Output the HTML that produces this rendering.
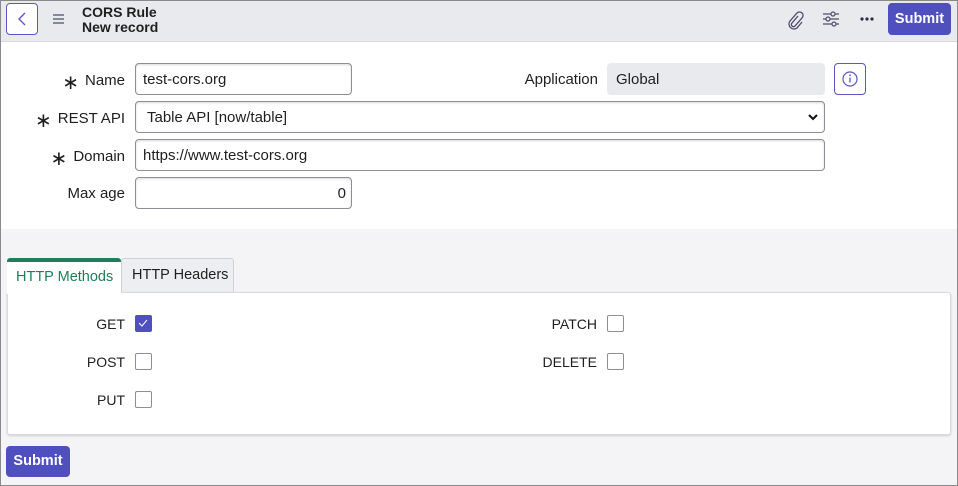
<!DOCTYPE html>
<html><head><meta charset="utf-8"><style>
*{box-sizing:border-box;margin:0;padding:0}
body{width:958px;height:486px;font-family:"Liberation Sans",sans-serif;color:#1f1f1f;background:#f4f4f6;position:relative;overflow:hidden}
.frame{position:absolute;inset:0;border:1px solid #8a8a8a;pointer-events:none;z-index:10}
.hdr{position:absolute;left:0;top:0;width:958px;height:42px;background:#e9eaee;border-bottom:1px solid #d8d9dd}
.back{position:absolute;left:6px;top:3px;width:32px;height:32px;border:1px solid #5b57c7;border-radius:4px;background:#fff}
.title{position:absolute;left:82px;top:5px;font-weight:bold;font-size:14px;line-height:15px;color:#1f1f1f}
.btn{position:absolute;background:#4f4fbf;color:#fff;font-weight:bold;font-size:14.5px;border-radius:4px;text-align:center}
.form{position:absolute;left:1px;top:42px;width:956px;height:187px;background:#fff}
.lbl{position:absolute;font-size:15px;text-align:right;color:#1f1f1f}
.inp{position:absolute;height:32px;border:1px solid #8e8e96;border-radius:4px;background:#fff;font-size:15px;padding:7px 10px;box-shadow:inset 0 1px 2px rgba(0,0,0,.15)}
.star{font-size:20px;font-weight:normal;vertical-align:-4px;margin-right:6px}
.tabA{position:absolute;left:7px;top:258px;width:114px;height:36px;background:#fff;border-top:4px solid #1d7f5a;border-radius:3px 3px 0 0;color:#1d7f5a;font-size:14.5px;padding:7px 0 0 9px;z-index:2}
.tabB{position:absolute;left:121px;top:258px;width:113px;height:35px;background:#eceef1;border:1px solid #d0d1d5;border-bottom:none;border-radius:3px 3px 0 0;font-size:14.5px;padding:8px 0 0 10px}
.panel{position:absolute;left:7px;top:292px;width:944px;height:143px;background:#fff;border:1px solid #d8d9dd;border-radius:0 3px 3px 3px;box-shadow:0 1px 2px rgba(0,0,0,.15)}
.cb{position:absolute;width:17px;height:17px;border:1.5px solid #8e8e96;border-radius:2px;background:#fff}
.cl{position:absolute;font-size:14px;text-align:right}
</style></head><body>
<div class="hdr">
 <div class="back"><svg width="30" height="30" viewBox="0 0 30 30"><path d="M18 9l-6 6 6 6" fill="none" stroke="#5b57c7" stroke-width="1.4"/></svg></div>
 <svg style="position:absolute;left:52px;top:13px" width="13" height="12"><path d="M1 2h11M1 6h11M1 10h11" stroke="#4b4f6a" stroke-width="1.3"/></svg>
 <div class="title">CORS Rule<br>New record</div>
 <svg style="position:absolute;left:786px;top:10px" width="18" height="20" viewBox="0 0 18 20"><path d="M12 6l-6 7a2 2 0 0 0 3 3l7-8a3.5 3.5 0 0 0-5-5l-7 8a5 5 0 0 0 7 7l5-6" fill="none" stroke="#4b4f6a" stroke-width="1.3"/></svg>
 <svg style="position:absolute;left:822px;top:11px" width="18" height="16"><path d="M1 3h16M1 8h16M1 13h16" stroke="#4b4f6a" stroke-width="1.2"/><circle cx="11" cy="3" r="2" fill="#e9eaee" stroke="#4b4f6a" stroke-width="1.2"/><circle cx="6" cy="8" r="2" fill="#e9eaee" stroke="#4b4f6a" stroke-width="1.2"/><circle cx="12" cy="13" r="2" fill="#e9eaee" stroke="#4b4f6a" stroke-width="1.2"/></svg>
 <svg style="position:absolute;left:860px;top:17px" width="14" height="4"><circle cx="2" cy="2" r="1.6" fill="#2a2d45"/><circle cx="7" cy="2" r="1.6" fill="#2a2d45"/><circle cx="12" cy="2" r="1.6" fill="#2a2d45"/></svg>
 <div class="btn" style="left:888px;top:3px;width:63px;height:32px;line-height:32px">Submit</div>
</div>
<div class="form">
 <div class="lbl" style="left:40px;top:28px;width:84px"><span class="star">∗</span>Name</div>
 <div class="inp" style="left:134px;top:21px;width:217px;padding-left:7px">test-cors.org</div>
 <div class="lbl" style="left:500px;top:29px;width:97px">Application</div>
 <div class="inp" style="left:606px;top:21px;width:218px;background:#e9eaee;border-color:#e9eaee;box-shadow:none;padding-left:8px">Global</div>
 <div style="position:absolute;left:833px;top:21px;width:32px;height:32px;border:1px solid #5b57c7;border-radius:4px"><svg width="30" height="30"><circle cx="15" cy="15" r="7" fill="none" stroke="#5b57c7" stroke-width="1.2"/><path d="M15 13.5v5" stroke="#5b57c7" stroke-width="1.3"/><circle cx="15" cy="11.3" r=".9" fill="#5b57c7"/></svg></div>
 <div class="lbl" style="left:20px;top:66px;width:104px"><span class="star">∗</span>REST API</div>
 <div class="inp" style="left:134px;top:59px;width:690px;padding-left:11px">Table API [now/table]<svg style="position:absolute;right:6px;top:11px" width="10" height="8"><path d="M1 2l4 4 4-4" fill="none" stroke="#111" stroke-width="2"/></svg></div>
 <div class="lbl" style="left:30px;top:104px;width:94px"><span class="star">∗</span>Domain</div>
 <div class="inp" style="left:134px;top:97px;width:690px;padding-left:7px">https://www.test-cors.org</div>
 <div class="lbl" style="left:40px;top:143px;width:84px">Max age</div>
 <div class="inp" style="left:134px;top:135px;width:217px;text-align:right;padding-right:5px">0</div>
</div>
<div class="tabB">HTTP Headers</div>
<div class="tabA">HTTP Methods</div>
<div class="panel"></div>
<div class="cl" style="left:60px;top:316px;width:65px">GET</div>
<div class="cb" style="left:135px;top:315px;background:#4f4fbf;border-color:#4f4fbf"><svg width="14" height="14" style="position:absolute;left:0;top:0"><path d="M3 7l3 3 5-6" fill="none" stroke="#fff" stroke-width="1"/></svg></div>
<div class="cl" style="left:60px;top:354px;width:65px">POST</div>
<div class="cb" style="left:135px;top:353px"></div>
<div class="cl" style="left:60px;top:392px;width:65px">PUT</div>
<div class="cb" style="left:135px;top:391px"></div>
<div class="cl" style="left:520px;top:316px;width:77px">PATCH</div>
<div class="cb" style="left:607px;top:315px"></div>
<div class="cl" style="left:520px;top:354px;width:77px">DELETE</div>
<div class="cb" style="left:607px;top:353px"></div>
<div class="btn" style="left:6px;top:446px;width:64px;height:31px;line-height:31px">Submit</div>
<div class="frame"></div>
</body></html>
